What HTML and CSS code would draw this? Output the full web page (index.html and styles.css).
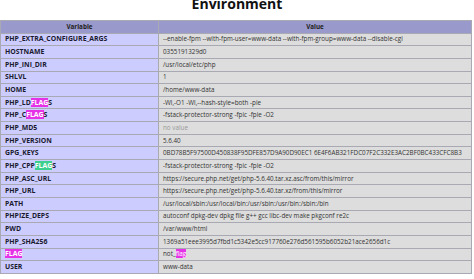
FILE: index.html
```html
<!DOCTYPE html>
<html lang="en">
  <head>
    <meta charset="UTF-8" />
    <title>phpinfo - Environment</title>
    <link rel="stylesheet" href="styles.css">
  </head>
  <body>
    <h2 class="title">Environment</h2>
    <table class="env">
      <tr class="h"><th>Variable</th><th>Value</th></tr>
      <tr><td class="e">PHP_EXTRA_CONFIGURE_ARGS </td><td class="v">--enable-fpm --with-fpm-user=www-data --with-fpm-group=www-data --disable-cgi </td></tr>
      <tr><td class="e">HOSTNAME </td><td class="v">0355191329d0 </td></tr>
      <tr><td class="e">PHP_INI_DIR </td><td class="v">/usr/local/etc/php </td></tr>
      <tr><td class="e">SHLVL </td><td class="v">1 </td></tr>
      <tr><td class="e">HOME </td><td class="v">/home/www-data </td></tr>
      <tr><td class="e">PHP_LD<mark class="hl">FLAG</mark>S </td><td class="v">-Wl,-O1 -Wl,--hash-style=both -pie </td></tr>
      <tr><td class="e">PHP_C<mark class="hl">FLAG</mark>S </td><td class="v">-fstack-protector-strong -fpic -fpie -O2 </td></tr>
      <tr><td class="e">PHP_MD5 </td><td class="v"><i class="nv">no value</i> </td></tr>
      <tr><td class="e">PHP_VERSION </td><td class="v">5.6.40 </td></tr>
      <tr><td class="e">GPG_KEYS </td><td class="v">0BD78B5F97500D450838F95DFE857D9A90D90EC1 6E4F6AB321FDC07F2C332E3AC2BF0BC433CFC8B3 </td></tr>
      <tr><td class="e">PHP_CPP<mark class="hl current">FLAG</mark>S </td><td class="v">-fstack-protector-strong -fpic -fpie -O2 </td></tr>
      <tr><td class="e">PHP_ASC_URL </td><td class="v">https://secure.php.net/get/php-5.6.40.tar.xz.asc/from/this/mirror </td></tr>
      <tr><td class="e">PHP_URL </td><td class="v">https://secure.php.net/get/php-5.6.40.tar.xz/from/this/mirror </td></tr>
      <tr><td class="e">PATH </td><td class="v">/usr/local/sbin:/usr/local/bin:/usr/sbin:/usr/bin:/sbin:/bin </td></tr>
      <tr><td class="e">PHPIZE_DEPS </td><td class="v">autoconf dpkg-dev dpkg file g++ gcc libc-dev make pkgconf re2c </td></tr>
      <tr><td class="e">PWD </td><td class="v">/var/www/html </td></tr>
      <tr><td class="e">PHP_SHA256 </td><td class="v">1369a51eee3995d7fbd1c5342e5cc917760e276d561595b6052b21ace2656d1c </td></tr>
      <tr><td class="e"><mark class="hl">FLAG</mark> </td><td class="v">not_<mark class="hl">flag</mark> </td></tr>
      <tr><td class="e">USER </td><td class="v">www-data </td></tr>
    </table>
  </body>
</html>
```

FILE: styles.css
```css
body {
  margin: 0;
  background: #fff;
  color: #222;
  font-family: "Open Sans", sans-serif;
}

.title {
  margin: -4px 0 0;
  height: 24px;
  font-size: 14px;
  line-height: 16px;
  text-align: center;
  color: #111;
}

.env {
  border-collapse: collapse;
  width: 472px;
  table-layout: fixed;
}

.env th,
.env td {
  height: 11.65px;
  padding: 0 4px;
  font-size: 6.3px;
  line-height: 10px;
  border: 1px solid #a9a9b4;
  text-align: left;
  white-space: nowrap;
  overflow: hidden;
}

.env th {
  background: #9999cc;
  font-weight: bold;
  text-align: center;
  color: #222;
}

.env th:first-child,
.e {
  width: 149px;
}

.env .e {
  background: #ccccff;
  font-weight: bold;
  font-size: 6.9px;
  color: #1a1a2e;
}

.v {
  background: #dddddd;
  color: #333;
}

.nv {
  color: #999;
  font-style: normal;
}

.hl {
  background: #e632e6;
  color: #fff;
  padding: 0;
}

.hl.current {
  background: #3ccf8e;
}
```
